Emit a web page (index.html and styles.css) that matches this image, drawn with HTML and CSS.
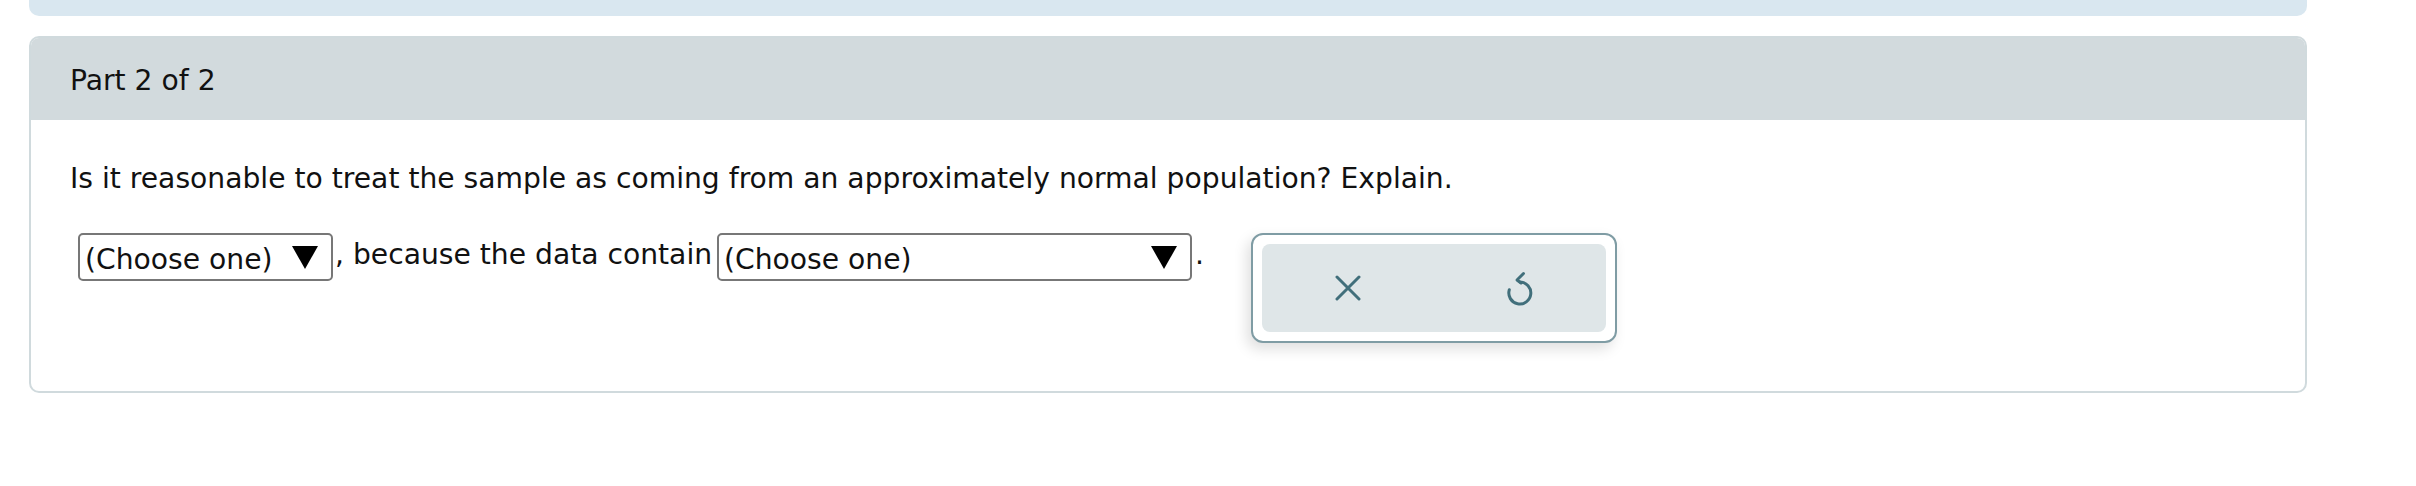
FILE: index.html
```html
<!DOCTYPE html>
<html>
<head>
<title>Part 2 of 2</title>
<link rel="stylesheet" href="styles.css">
</head>
<body>
<div class="page">
  <div class="prev-part"></div>

  <div class="part">
    <div class="part-head">Part 2 of 2</div>
    <div class="part-body">
      <p class="question">Is it reasonable to treat the sample as coming from an approximately normal population? Explain.</p>
      <div class="answer-row">
        <div class="pick pick-short">
          <span class="pick-text">(Choose one)</span>
          <span class="arrow"></span>
        </div>
        <span class="joiner">, because the data contain</span>
        <div class="pick pick-long">
          <span class="pick-text">(Choose one)</span>
          <span class="arrow"></span>
        </div>
        <span class="stop">.</span>

        <div class="tools">
          <div class="tools-inner">
            <span class="tool">
              <svg width="26" height="26" viewBox="0 0 26 26">
                <path d="M2 2 L24 24 M24 2 L2 24" fill="none" stroke="#416f7b" stroke-width="3" stroke-linecap="round"/>
              </svg>
            </span>
            <span class="tool">
              <svg width="28" height="36" viewBox="0 0 28 36">
                <path d="M14 12 A11 11 0 1 1 3.3 19.8" fill="none" stroke="#416f7b" stroke-width="3" stroke-linecap="round"/>
                <path d="M17.5 3.5 L11 10 L15 13" fill="none" stroke="#416f7b" stroke-width="3" stroke-linecap="round" stroke-linejoin="round"/>
              </svg>
            </span>
          </div>
        </div>
      </div>
    </div>
  </div>
</div>
</body>
</html>
```

FILE: styles.css
```css
body {
  margin: 0;
  font-family: "DejaVu Sans", Verdana, sans-serif;
  font-size: 28.2px;
  color: #111;
  background: #fff;
}
.page {
  padding: 0 109px 0 29px;
}
.prev-part {
  height: 16px;
  background: #d9e7f0;
  border-radius: 0 0 10px 10px;
}
.part {
  margin-top: 20px;
  height: 357px;
  box-sizing: border-box;
  border: 2px solid #d0dadd;
  border-radius: 10px;
  overflow: hidden;
}
.part-head {
  height: 82px;
  box-sizing: border-box;
  padding-top: 3px;
  background: #d2dadd;
  display: flex;
  align-items: center;
  padding-left: 39px;
}
.part-body {
  padding: 42px 0 0 39px;
}
.question {
  margin: 0;
  line-height: 34px;
}
.answer-row {
  display: flex;
  align-items: flex-start;
  margin-top: 37px;
  padding-left: 8px;
}
.pick {
  display: flex;
  align-items: center;
  justify-content: space-between;
  height: 48px;
  box-sizing: border-box;
  border: 2px solid #777;
  border-radius: 5px;
  padding: 0 13px 0 5px;
  background: #fff;
}
.pick-short {
  width: 255px;
}
.pick-long {
  width: 475px;
}
.pick-text {
  line-height: 44px;
  padding-top: 5px;
}
.arrow {
  width: 0;
  height: 0;
  border-left: 13px solid transparent;
  border-right: 13px solid transparent;
  border-top: 23px solid #000;
}
.joiner,
.stop {
  line-height: 44px;
  white-space: pre;
}
.joiner {
  padding: 0 5px 0 2px;
}
.stop {
  padding-left: 3px;
}
.tools {
  margin-left: 47px;
  width: 366px;
  height: 110px;
  box-sizing: border-box;
  border: 2px solid #7f9ca4;
  border-radius: 12px;
  padding: 9px;
  background: #fff;
  box-shadow: -4px 6px 14px rgba(0, 0, 0, 0.13);
}
.tools-inner {
  height: 100%;
  background: #dfe6e8;
  border-radius: 8px;
  display: flex;
  align-items: center;
  justify-content: space-around;
}
.tool {
  display: flex;
  align-items: center;
  justify-content: center;
  width: 100px;
}
```
